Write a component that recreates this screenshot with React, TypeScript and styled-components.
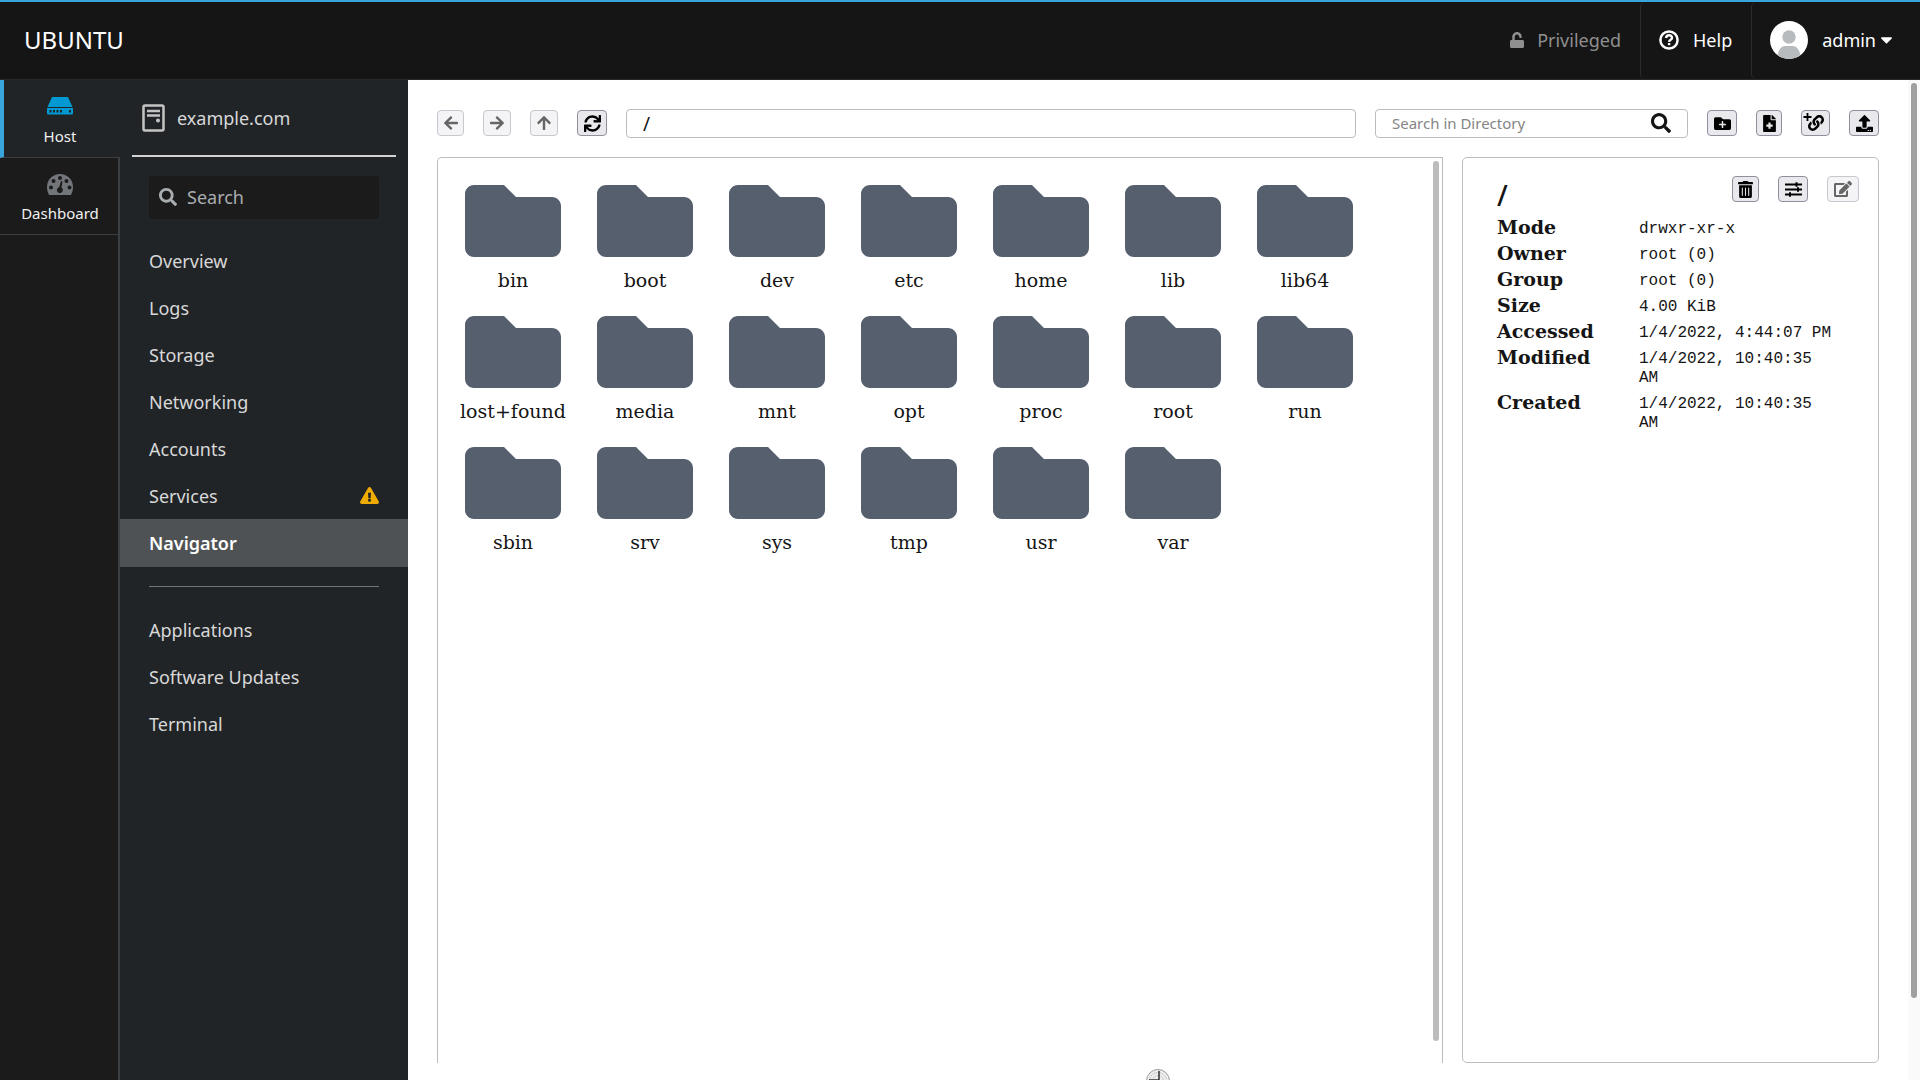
import React from 'react';
import styled, { createGlobalStyle } from 'styled-components';
import {
  FaArrowLeft, FaArrowRight, FaArrowUp, FaSync, FaSearch, FaFolderPlus, FaFileMedical,
  FaLink, FaUpload, FaTrashAlt, FaEdit, FaFolder, FaUnlock, FaCaretDown, FaExclamationTriangle,
} from 'react-icons/fa';

const sans = '"Noto Sans", "Open Sans", sans-serif';
const serif = '"DejaVu Serif", serif';
const mono = '"Liberation Mono", monospace';

const GlobalStyle = createGlobalStyle`
  *, *::before, *::after { box-sizing: border-box; }
  body { margin: 0; background: #fff; color: #151515; font-family: ${sans}; }
  button, input { font: inherit; }
  svg { display: block; flex: none; }
`;

const Shell = styled.div`
  height: 100vh;
  display: flex;
  flex-direction: column;
  overflow: hidden;
`;

const Masthead = styled.header`
  height: 80px;
  flex: none;
  display: flex;
  align-items: stretch;
  background: #151515;
  border-top: 2px solid #39a5dc;
  border-bottom: 1px solid #292929;
  color: #fff;
  font-size: 18px;
`;

const Brand = styled.h1`
  margin: 0 auto 0 0;
  padding: 0 0 2px 24px;
  display: flex;
  align-items: center;
  font-size: 24px;
  font-weight: 400;
`;

const HeaderButton = styled.button<{ $muted?: boolean; $divided?: boolean; $gap: number }>`
  display: flex;
  align-items: center;
  gap: ${p => p.$gap}px;
  padding: 0 19px 2px 18px;
  background: none;
  border: 0;
  border-left: 1px solid ${p => (p.$divided ? '#2b2b2b' : 'transparent')};
  border-radius: 5px;
  color: ${p => (p.$muted ? '#8f8f8f' : '#fff')};
`;

const UserName = styled.span`
  display: flex;
  align-items: center;
  gap: 1px;
  padding-right: 5px;
`;

const Body = styled.div`
  flex: 1;
  min-height: 0;
  display: flex;
`;

const Rail = styled.nav`
  width: 120px;
  flex: none;
  display: flex;
  flex-direction: column;
  background: #1b1b1b;
`;

const RailLink = styled.a<{ $active?: boolean }>`
  height: ${p => (p.$active ? 78 : 77)}px;
  display: flex;
  flex-direction: column;
  align-items: center;
  justify-content: space-between;
  padding: ${p => (p.$active ? '13px 4px 10px 0' : '13px 0 10px 2px')};
  color: #f0f0f0;
  font-size: 15px;
  line-height: 22px;
  text-decoration: none;
  background: ${p => (p.$active ? '#212427' : 'none')};
  border-bottom: 1px solid #3c3f42;
  border-left: ${p => (p.$active ? '4px solid #39a5dc' : '0')};
  border-right: ${p => (p.$active ? '0' : '2px solid #3c3f42')};
`;

const RailIcon = styled.span`
  height: 26px;
  display: flex;
  align-items: center;
`;

const RailRest = styled.div`
  flex: 1;
  border-right: 2px solid #3c3f42;
`;

const Side = styled.div`
  width: 288px;
  flex: none;
  background: #212427;
  color: #d8d8d8;
  font-size: 18px;
`;

const HostName = styled.div`
  height: 77px;
  margin: 0 12px;
  padding: 0 10px;
  display: flex;
  align-items: center;
  gap: 12px;
  border-bottom: 2px solid #d2d2d2;
`;

const SideSearch = styled.label`
  height: 43px;
  margin: 19px 29px 18px;
  padding: 0 10px 2px;
  display: flex;
  align-items: center;
  gap: 10px;
  background: #1b1b1b;
  border-radius: 3px;
  color: #aaadb0;
`;

const PlainInput = styled.input`
  flex: 1;
  min-width: 0;
  padding: 0;
  border: 0;
  outline: 0;
  background: none;
  color: inherit;
  &::placeholder { color: inherit; opacity: 1; }
`;

const List = styled.ul`
  list-style: none;
  margin: 0;
  padding: 0;
`;

const SideLink = styled.a<{ $active?: boolean }>`
  height: ${p => (p.$active ? 48 : 47)}px;
  padding: 0 29px;
  display: flex;
  align-items: center;
  justify-content: space-between;
  color: ${p => (p.$active ? '#fff' : '#d8d8d8')};
  font-weight: ${p => (p.$active ? 600 : 400)};
  background: ${p => (p.$active ? '#4f5255' : 'none')};
  text-decoration: none;
`;

const Rule = styled.hr`
  margin: 19px 29px;
  border: 0;
  border-top: 1px solid #72767b;
`;

const Main = styled.main`
  flex: 1;
  min-width: 0;
  display: flex;
  flex-direction: column;
  gap: 19px;
  padding: 29px 29px 17px;
`;

const Tool = styled.button<{ $w: number }>`
  width: ${p => p.$w}px;
  height: 26px;
  flex: none;
  display: flex;
  align-items: center;
  justify-content: center;
  padding: 0;
  background: #e9e9ed;
  border: 1px solid #8f8f9d;
  border-radius: 4px;
  color: #000;
  font-size: 17px;
  &:disabled { color: #666; background: #f4f4f6; border-color: #c7c7ce; }
`;

const Toolbar = styled.div`
  display: flex;
  align-items: center;
  gap: 19px;
  > ${Tool} { margin-bottom: 1px; }
`;

const PathInput = styled.input`
  flex: 1;
  min-width: 0;
  height: 29px;
  padding: 0 16px;
  border: 1px solid #bcbcbc;
  border-radius: 4px;
  color: #151515;
  font-size: 19px;
`;

const DirSearch = styled.label`
  width: 313px;
  height: 29px;
  padding: 0 16px 2px;
  display: flex;
  align-items: center;
  border: 1px solid #bcbcbc;
  border-radius: 4px;
  font-size: 15px;
  ${PlainInput}::placeholder { color: #858585; }
`;

const Panels = styled.div`
  flex: 1;
  min-height: 0;
  display: flex;
  gap: 19px;
`;

const Files = styled.section`
  flex: 1;
  min-width: 0;
  display: flex;
  padding: 3px;
  border: 1px solid #bcbcbc;
  border-bottom: 0;
  border-radius: 5px 0 0 0;
`;

const Grid = styled.ul`
  flex: 1;
  margin: 0;
  padding: 24px 6px;
  list-style: none;
  display: grid;
  grid-template-columns: repeat(auto-fill, 132px);
  grid-auto-rows: 131px;
`;

const Entry = styled.a`
  display: flex;
  flex-direction: column;
  align-items: center;
  gap: 12px;
  color: #151515;
  font: 19px/23px ${serif};
  text-decoration: none;
`;

const FolderArt = styled(FaFolder).attrs({ viewBox: '0 64 512 384' })`
  width: 96px;
  height: 72px;
  color: #565f6e;
`;

const Thumb = styled.div<{ $tone: string }>`
  width: 6px;
  border-radius: 3px;
  background: ${p => p.$tone};
`;

const FilesThumb = styled(Thumb)`
  margin-bottom: 19px;
`;

const PageTrack = styled.div`
  width: 12px;
  flex: none;
  padding: 3px 3px 82px;
  display: flex;
  background: #fafafa;
`;

const Info = styled.aside`
  width: 417px;
  flex: none;
  padding: 18px 19px 19px 34px;
  border: 1px solid #bcbcbc;
  border-radius: 5px;
`;

const InfoHead = styled.div`
  height: 40px;
  display: flex;
  align-items: flex-start;
  gap: 19px;
`;

const InfoTitle = styled.h2`
  flex: 1;
  margin: 0;
  font-size: 28px;
  line-height: 38px;
  font-weight: 500;
`;

const Stats = styled.dl`
  margin: 0;
`;

const Stat = styled.div`
  padding-bottom: 3px;
  display: grid;
  grid-template-columns: 142px 1fr;
  dt { font: bold 19px/22px ${serif}; }
  dd { margin: 0; padding: 4px 19px 0 0; font: 16px/19px ${mono}; }
`;

const BusyBadge = styled.div`
  position: absolute;
  left: 1146px;
  bottom: -13px;
`;

const Page = styled.div`
  position: relative;
  height: 100vh;
  overflow: hidden;
`;

const HostIcon = () => (
  <svg width="26" height="18" viewBox="0 0 26 18">
    <path d="M5 0h16l4.500 10H.5z" fill="#0099d3" />
    <path fillRule="evenodd" fill="#0099d3" d="M0 11h26v5.500q0 1-1 1H1q-1 0-1-1zM2.500 13v2.500h2V13zM6 13v2.500h2V13zM9.500 13v2.500h2V13zM13 13v2.500h2V13zM22 13v2.500h2V13z" />
  </svg>
);

const GaugeIcon = () => (
  <svg width="26" height="21" viewBox="0 0 26 21">
    <path d="M13 0A13 13 0 0 0 0 13c0 3 .8 5.500 2 8h22c1.200-2.500 2-5 2-8A13 13 0 0 0 13 0z" fill="#72767b" />
    <g fill="#1b1b1b">
      <circle cx="13" cy="4" r="2" /><circle cx="6.500" cy="7" r="2" /><circle cx="19.500" cy="7" r="2" />
      <circle cx="4" cy="13.500" r="2" /><circle cx="22.500" cy="13.500" r="2" />
      <path d="M14 7l1.500.4-1 6.200a3 3 0 1 1-2.300-.4z" />
    </g>
  </svg>
);

const ServerIcon = () => (
  <svg width="23" height="28" viewBox="0 0 23 28" fill="none" stroke="#c4c4c4">
    <rect x="1.500" y="1.500" width="20" height="25" rx="1.500" strokeWidth="2.500" />
    <path d="M5 7h13M5 11.500h13" strokeWidth="2.500" />
    <circle cx="16" cy="16.500" r="2" fill="#c4c4c4" stroke="none" />
  </svg>
);

const HelpIcon = () => (
  <svg width="20" height="20" viewBox="0 0 20 20" fill="none" stroke="#fff">
    <circle cx="10" cy="10" r="8.600" strokeWidth="2.500" />
    <path d="M7 8q.3-2.800 3-2.800T13 7.700q0 1.200-1.300 2-1.500.8-1.600 2.100" strokeWidth="2.400" />
    <path d="M8.900 13h2.400v2.200H8.900z" fill="#fff" stroke="none" />
  </svg>
);

const Avatar = () => (
  <svg width="38" height="38" viewBox="0 0 38 38">
    <defs><clipPath id="avatar"><circle cx="19" cy="19" r="19" /></clipPath></defs>
    <g clipPath="url(#avatar)">
      <rect width="38" height="38" fill="#fff" />
      <circle cx="19" cy="16" r="6.700" fill="#b8bbbe" />
      <path d="M7.500 38c0-9 3.500-13 8-13h7c4.500 0 8 4 8 13z" fill="#b8bbbe" />
    </g>
  </svg>
);

const LinkPlus = () => (
  <svg width="25" height="22" viewBox="0 0 25 22">
    <path d="M4.500 1v8M.5 5h8" stroke="#000" strokeWidth="1.800" />
    <FaLink x="5" y="3" width="16" height="16" size={16} />
  </svg>
);

const Adjust = () => (
  <svg width="17" height="15" viewBox="0 0 17 15" fill="#000">
    <path d="M0 1.600h17v1.800H0zM0 6.600h17v1.800H0zM0 11.600h17v1.800H0z" />
    <path d="M10.500.3h2v4.400h-2zM12 5.300h2v4.400h-2zM4 10.300h2v4.400H4z" />
  </svg>
);

const Clock = () => (
  <svg width="24" height="24" viewBox="0 0 24 24" fill="none">
    <circle cx="12" cy="12" r="11.500" fill="#eee" stroke="#999" />
    <g stroke="#aaa">
      <circle cx="12" cy="12" r="8.500" strokeDasharray="1 1" />
      <circle cx="12" cy="12" r="5.500" strokeDasharray="1 1" />
    </g>
    <path d="M13 2v9M3 11h10" stroke="#333" strokeWidth="1.500" />
  </svg>
);

const system = ['Overview', 'Logs', 'Storage', 'Networking', 'Accounts', 'Services', 'Navigator'];
const tools = ['Applications', 'Software Updates', 'Terminal'];
const folders = [
  'bin', 'boot', 'dev', 'etc', 'home', 'lib', 'lib64', 'lost+found', 'media', 'mnt',
  'opt', 'proc', 'root', 'run', 'sbin', 'srv', 'sys', 'tmp', 'usr', 'var',
];
const stats = [
  ['Mode', 'drwxr-xr-x'],
  ['Owner', 'root (0)'],
  ['Group', 'root (0)'],
  ['Size', '4.00 KiB'],
  ['Accessed', '1/4/2022, 4:44:07 PM'],
  ['Modified', '1/4/2022, 10:40:35 AM'],
  ['Created', '1/4/2022, 10:40:35 AM'],
];

export default function App() {
  return (
    <Page>
      <GlobalStyle />
      <Shell>
        <Masthead>
          <Brand>UBUNTU</Brand>
          <HeaderButton $muted $gap={12}><FaUnlock size={16} />Privileged</HeaderButton>
          <HeaderButton $divided $gap={14}><HelpIcon />Help</HeaderButton>
          <HeaderButton $divided $gap={14}>
            <Avatar />
            <UserName>admin<FaCaretDown size={19} /></UserName>
          </HeaderButton>
        </Masthead>
        <Body>
          <Rail aria-label="Hosts">
            <RailLink href="#host" $active><RailIcon><HostIcon /></RailIcon>Host</RailLink>
            <RailLink href="#dashboard"><RailIcon><GaugeIcon /></RailIcon>Dashboard</RailLink>
            <RailRest />
          </Rail>
          <Side>
            <HostName><ServerIcon />example.com</HostName>
            <SideSearch>
              <FaSearch size={18} />
              <PlainInput type="text" placeholder="Search" aria-label="Search" />
            </SideSearch>
            <nav aria-label="System">
              <List>
                {system.map(name => (
                  <li key={name}>
                    <SideLink href={`#${name}`} $active={name === 'Navigator'}>
                      {name}
                      {name === 'Services' && <FaExclamationTriangle size={19} color="#f0ab00" />}
                    </SideLink>
                  </li>
                ))}
              </List>
              <Rule />
              <List>
                {tools.map(name => <li key={name}><SideLink href={`#${name}`}>{name}</SideLink></li>)}
              </List>
            </nav>
          </Side>
          <Main>
            <Toolbar>
              <Tool $w={27} disabled aria-label="Back"><FaArrowLeft size={16} /></Tool>
              <Tool $w={28} disabled aria-label="Forward"><FaArrowRight size={16} /></Tool>
              <Tool $w={28} disabled aria-label="Up"><FaArrowUp size={16} /></Tool>
              <Tool $w={30} aria-label="Refresh"><FaSync /></Tool>
              <PathInput aria-label="Path" defaultValue="/" />
              <DirSearch>
                <PlainInput type="text" placeholder="Search in Directory" aria-label="Search in Directory" />
                <FaSearch size={20} />
              </DirSearch>
              <Tool $w={30} aria-label="New folder"><FaFolderPlus /></Tool>
              <Tool $w={26} aria-label="New file"><FaFileMedical /></Tool>
              <Tool $w={29} aria-label="New link"><LinkPlus /></Tool>
              <Tool $w={30} aria-label="Upload"><FaUpload /></Tool>
            </Toolbar>
            <Panels>
              <Files aria-label="Files">
                <Grid>
                  {folders.map(name => (
                    <li key={name}><Entry href={`#/${name}`}><FolderArt />{name}</Entry></li>
                  ))}
                </Grid>
                <FilesThumb $tone="#bcbcbc" />
              </Files>
              <Info>
                <InfoHead>
                  <InfoTitle>/</InfoTitle>
                  <Tool $w={27} aria-label="Delete"><FaTrashAlt /></Tool>
                  <Tool $w={30} aria-label="Properties"><Adjust /></Tool>
                  <Tool $w={32} disabled aria-label="Edit"><FaEdit size={18} /></Tool>
                </InfoHead>
                <Stats>
                  {stats.map(([label, value]) => (
                    <Stat key={label}><dt>{label}</dt><dd>{value}</dd></Stat>
                  ))}
                </Stats>
              </Info>
            </Panels>
          </Main>
          <PageTrack><Thumb $tone="#a0a0a0" /></PageTrack>
        </Body>
      </Shell>
      <BusyBadge><Clock /></BusyBadge>
    </Page>
  );
}
